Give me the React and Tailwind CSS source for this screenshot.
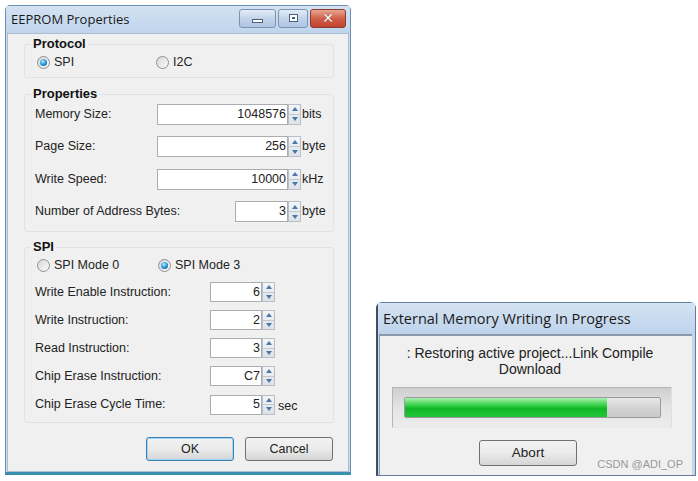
import React from "react";

const font = { fontFamily: '"Liberation Sans", Arial, sans-serif' };

const Radio = ({ checked, label }) => (
  <div className="flex items-center gap-[4px]">
    <span className="w-[13px] h-[13px] rounded-full border border-[#8f8f8f] bg-gradient-to-br from-[#d8d8d8] to-[#fafafa] flex items-center justify-center">
      {checked && (
        <span className="w-[7px] h-[7px] rounded-full bg-[radial-gradient(circle_at_40%_35%,#b5ecff,#1f8fd6_55%,#0b4d8c)]" />
      )}
    </span>
    <span className="text-[12.5px] text-[#222]">{label}</span>
  </div>
);

const Spinner = ({ h = 21 }) => (
  <div className="w-[13px] flex flex-col border border-[#b9bfc7] bg-gradient-to-b from-[#f3f5f7] to-[#dde2e7]" style={{ height: h }}>
    <div className="flex-1 flex items-center justify-center border-b border-[#c2c8cf]">
      <span className="w-0 h-0 border-l-[3.5px] border-r-[3.5px] border-b-[4px] border-l-transparent border-r-transparent border-b-[#4a78a8]" />
    </div>
    <div className="flex-1 flex items-center justify-center">
      <span className="w-0 h-0 border-l-[3.5px] border-r-[3.5px] border-t-[4px] border-l-transparent border-r-transparent border-t-[#4a78a8]" />
    </div>
  </div>
);

const NumField = ({ value, width, unit, h = 21 }) => (
  <div className="flex items-center">
    <div className="bg-white border border-[#abadb3] text-right text-[12.5px] text-[#222] pr-[1px] leading-none flex items-center justify-end" style={{ width, height: h }}>
      {value}
    </div>
    <Spinner h={h} />
    {unit && <span className="text-[12.5px] text-[#222] ml-[1px]">{unit}</span>}
  </div>
);

const Group = ({ title, className, children }) => (
  <div className={"relative border border-[#dfe3e8] rounded-[3px] " + className}>
    <span className="absolute -top-[9px] left-[6px] px-[2px] bg-[#f0f0f0] text-[13px] font-bold text-[#111] leading-[16px]">
      {title}
    </span>
    {children}
  </div>
);

const CapBtn = ({ children, red, w }) => (
  <div
    className={
      "h-[19px] rounded-[3px] border flex items-center justify-center " +
      (red
        ? "border-[#8d3a2e] bg-gradient-to-b from-[#e8a493] via-[#d0604a] to-[#c2412c]"
        : "border-[#7b93b3] bg-gradient-to-b from-[#e3ecf7] via-[#c3d4ea] to-[#aec4e2]")
    }
    style={{ width: w }}
  >
    {children}
  </div>
);

const Row = ({ label, labelW, children, h }) => (
  <div className="flex items-center" style={{ height: h }}>
    <span className="text-[12.5px] text-[#222] shrink-0" style={{ width: labelW }}>{label}</span>
    {children}
  </div>
);

const Button = ({ children, focused, w = 88, h = 24 }) => (
  <div
    className={
      "rounded-[3px] border flex items-center justify-center text-[12.5px] text-[#222] bg-gradient-to-b from-[#f2f2f2] via-[#ebebeb] to-[#d5d5d5] " +
      (focused ? "border-[#3c7fb1] shadow-[inset_0_0_0_1px_#9fd6f5]" : "border-[#707070]")
    }
    style={{ width: w, height: h }}
  >
    {children}
  </div>
);

export default function App() {
  return (
    <div className="w-[698px] h-[481px] bg-white flex items-start overflow-hidden" style={font}>
      {/* EEPROM Properties dialog */}
      <div className="ml-[5px] mt-[5px] w-[346px] h-[470px] flex flex-col bg-[#c7d9ee] border border-[#6d8fb4] border-b-[3px] border-b-[#3a8fb0] rounded-t-[5px]">
        <div className="h-[27px] flex items-center justify-between pl-[5px] pr-[4px] bg-gradient-to-b from-[#d4e2f2] to-[#bfd4ec]">
          <span className="text-[13px] text-[#1a1a1a]" style={{ fontFamily: '"Open Sans", sans-serif' }}>EEPROM Properties</span>
          <div className="flex items-center gap-[2px] mt-[-3px]">
            <CapBtn w={37}>
              <span className="w-[11px] h-[4px] bg-white border border-[#4b607c] mt-[5px]" />
            </CapBtn>
            <CapBtn w={30}>
              <span className="w-[9px] h-[8px] bg-white border border-[#4b607c] flex items-center justify-center">
                <span className="w-[3px] h-[2px] bg-[#4b607c]" />
              </span>
            </CapBtn>
            <CapBtn red w={36}>
              <span className="text-white font-bold text-[14px] leading-none" style={{ fontFamily: '"DejaVu Sans", sans-serif', textShadow: "0 0 1px #5a1a10" }}>✕</span>
            </CapBtn>
          </div>
        </div>
        <div className="flex-1 mx-[1px] bg-[#f0f0f0] border border-[#aebdd0] flex flex-col pl-[16px] pr-[14px]">
          <Group title="Protocol" className="mt-[10px] h-[34px] flex items-center pl-[12px] pt-[2px]">
            <div className="w-[119px]"><Radio checked label="SPI" /></div>
            <Radio label="I2C" />
          </Group>

          <Group title="Properties" className="mt-[16px] h-[138px] flex flex-col pl-[10px] pt-[3px]">
            <Row label="Memory Size:" labelW={122} h={32}>
              <NumField value="1048576" width={131} unit="bits" />
            </Row>
            <Row label="Page Size:" labelW={122} h={33}>
              <NumField value="256" width={131} unit="byte" />
            </Row>
            <Row label="Write Speed:" labelW={122} h={32}>
              <NumField value="10000" width={131} unit="kHz" />
            </Row>
            <Row label="Number of Address Bytes:" labelW={200} h={33}>
              <NumField value="3" width={53} unit="byte" />
            </Row>
          </Group>

          <Group title="SPI" className="mt-[15px] h-[176px] flex flex-col pl-[10px] pt-[7px]">
            <div className="flex items-center h-[20px] pl-[2px]">
              <div className="w-[121px]"><Radio label="SPI Mode 0" /></div>
              <Radio checked label="SPI Mode 3" />
            </div>
            <div className="h-[3px]" />
            {[
              ["Write Enable Instruction:", "6"],
              ["Write Instruction:", "2"],
              ["Read Instruction:", "3"],
              ["Chip Erase Instruction:", "C7"],
            ].map(([l, v]) => (
              <Row key={l} label={l} labelW={175} h={28}>
                <NumField value={v} width={52} h={20} />
              </Row>
            ))}
            <Row label="Chip Erase Cycle Time:" labelW={175} h={29}>
              <NumField value="5" width={52} h={20} unit={<span className="ml-[2px] relative top-[2px]">sec</span>} />
            </Row>
          </Group>

          <div className="flex justify-end gap-[11px] mt-[14px] pr-[1px]">
            <Button focused>OK</Button>
            <Button>Cancel</Button>
          </div>
        </div>
      </div>

      {/* Progress dialog */}
      <div className="ml-[25px] mt-[302px] w-[320px] h-[174px] flex flex-col bg-[#c3d6ec] border border-[#5f7d9f] border-l-[2px] border-l-[#3d4f66] rounded-t-[6px]">
        <div className="h-[31px] flex items-center pl-[5px] bg-gradient-to-b from-[#d5e3f3] to-[#bed3eb]">
          <span className="text-[14.5px] text-[#1a1a1a]" style={{ fontFamily: '"Open Sans", sans-serif' }}>External Memory Writing In Progress</span>
        </div>
        <div className="flex-1 ml-[1px] mr-[3px] bg-[#f0f0f0] border-t-[2px] border-t-[#8a99aa] border-l border-l-[#8d9cad] flex flex-col items-start relative">
          <div className="mt-[9px] w-full pr-[12px] text-[14px] leading-[16px] text-[#222] text-center">
            : Restoring active project...Link Compile
            <br />
            Download
          </div>
          <div className="mt-[10px] ml-[12px] w-[280px] h-[41px] flex items-center justify-center border border-[#b5b5b5] border-r-[#e0e0e0] border-b-[#e8e8e8] bg-gradient-to-b from-[#cfcfcf] via-[#e4e4e4] to-[#ececec]">
            <div className="w-[257px] h-[21px] border border-[#9a9a9a] rounded-[2px] bg-gradient-to-b from-[#e8e8e8] via-[#d4d4d4] to-[#c9c9c9] flex overflow-hidden">
              <div className="w-[202px] h-full bg-[linear-gradient(to_bottom,#a8efb0_0%,#40d34f_35%,#0fb826_55%,#22c53a_100%)]" />
            </div>
          </div>
          <div className="mt-[12px] ml-[99px]">
            <Button w={98} h={26}>
              <span className="text-[13.5px]">Abort</span>
            </Button>
          </div>
          <span className="absolute right-[9px] bottom-[3px] text-[11px] text-[#999]">CSDN @ADI_OP</span>
        </div>
      </div>
    </div>
  );
}
